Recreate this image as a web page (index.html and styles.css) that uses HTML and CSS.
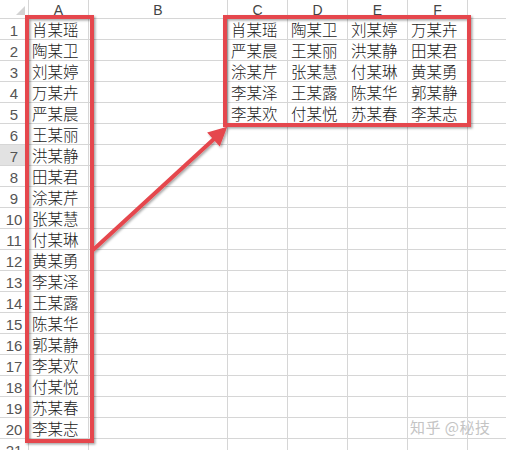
FILE: index.html
```html
<!DOCTYPE html>
<html lang="zh">
<head>
<meta charset="utf-8">
<link rel="stylesheet" href="styles.css">
</head>
<body>
<div class="sheet">
  <div class="grid" id="grid">
    <div class="corner"><span class="tri"></span></div>
    <div class="ch">A</div><div class="ch">B</div><div class="ch">C</div><div class="ch">D</div><div class="ch">E</div><div class="ch">F</div><div class="ch"></div>

    <div class="rh">1</div><div class="c">肖某瑶</div><div class="c"></div><div class="c">肖某瑶</div><div class="c">陶某卫</div><div class="c">刘某婷</div><div class="c">万某卉</div><div class="c"></div>
    <div class="rh">2</div><div class="c">陶某卫</div><div class="c"></div><div class="c">严某晨</div><div class="c">王某丽</div><div class="c">洪某静</div><div class="c">田某君</div><div class="c"></div>
    <div class="rh">3</div><div class="c">刘某婷</div><div class="c"></div><div class="c">涂某芹</div><div class="c">张某慧</div><div class="c">付某琳</div><div class="c">黄某勇</div><div class="c"></div>
    <div class="rh">4</div><div class="c">万某卉</div><div class="c"></div><div class="c">李某泽</div><div class="c">王某露</div><div class="c">陈某华</div><div class="c">郭某静</div><div class="c"></div>
    <div class="rh">5</div><div class="c">严某晨</div><div class="c"></div><div class="c">李某欢</div><div class="c">付某悦</div><div class="c">苏某春</div><div class="c">李某志</div><div class="c"></div>
    <div class="rh">6</div><div class="c">王某丽</div><div class="c"></div><div class="c"></div><div class="c"></div><div class="c"></div><div class="c"></div><div class="c"></div>
    <div class="rh sel">7</div><div class="c">洪某静</div><div class="c"></div><div class="c"></div><div class="c"></div><div class="c"></div><div class="c"></div><div class="c"></div>
    <div class="rh">8</div><div class="c">田某君</div><div class="c"></div><div class="c"></div><div class="c"></div><div class="c"></div><div class="c"></div><div class="c"></div>
    <div class="rh">9</div><div class="c">涂某芹</div><div class="c"></div><div class="c"></div><div class="c"></div><div class="c"></div><div class="c"></div><div class="c"></div>
    <div class="rh">10</div><div class="c">张某慧</div><div class="c"></div><div class="c"></div><div class="c"></div><div class="c"></div><div class="c"></div><div class="c"></div>
    <div class="rh">11</div><div class="c">付某琳</div><div class="c"></div><div class="c"></div><div class="c"></div><div class="c"></div><div class="c"></div><div class="c"></div>
    <div class="rh">12</div><div class="c">黄某勇</div><div class="c"></div><div class="c"></div><div class="c"></div><div class="c"></div><div class="c"></div><div class="c"></div>
    <div class="rh">13</div><div class="c">李某泽</div><div class="c"></div><div class="c"></div><div class="c"></div><div class="c"></div><div class="c"></div><div class="c"></div>
    <div class="rh">14</div><div class="c">王某露</div><div class="c"></div><div class="c"></div><div class="c"></div><div class="c"></div><div class="c"></div><div class="c"></div>
    <div class="rh">15</div><div class="c">陈某华</div><div class="c"></div><div class="c"></div><div class="c"></div><div class="c"></div><div class="c"></div><div class="c"></div>
    <div class="rh">16</div><div class="c">郭某静</div><div class="c"></div><div class="c"></div><div class="c"></div><div class="c"></div><div class="c"></div><div class="c"></div>
    <div class="rh">17</div><div class="c">李某欢</div><div class="c"></div><div class="c"></div><div class="c"></div><div class="c"></div><div class="c"></div><div class="c"></div>
    <div class="rh">18</div><div class="c">付某悦</div><div class="c"></div><div class="c"></div><div class="c"></div><div class="c"></div><div class="c"></div><div class="c"></div>
    <div class="rh">19</div><div class="c">苏某春</div><div class="c"></div><div class="c"></div><div class="c"></div><div class="c"></div><div class="c"></div><div class="c"></div>
    <div class="rh">20</div><div class="c">李某志</div><div class="c"></div><div class="c"></div><div class="c"></div><div class="c"></div><div class="c"></div><div class="c"></div>
    <div class="rh">21</div><div class="c"></div><div class="c"></div><div class="c"></div><div class="c"></div><div class="c"></div><div class="c"></div><div class="c"></div>
  </div>

  <svg class="annot" width="506" height="450" viewBox="0 0 506 450" xmlns="http://www.w3.org/2000/svg">
    <defs>
      <filter id="sh" x="-10%" y="-10%" width="130%" height="130%">
        <feDropShadow dx="1.5" dy="1.5" stdDeviation="1.2" flood-color="#000" flood-opacity="0.35"/>
      </filter>
    </defs>
    <g filter="url(#sh)" fill="none" stroke="#e5474d" stroke-width="4" stroke-linejoin="miter">
      <rect x="27" y="17" width="65" height="424"/>
      <rect x="225" y="17" width="244" height="108"/>
      <line x1="93" y1="250" x2="215" y2="138" stroke-linecap="round"/>
      <polygon points="226,128 219.5,145 208.5,133" fill="#e5474d" stroke-width="1.5"/>
    </g>
  </svg>

  <div class="mark">知乎 @秘技</div>
</div>
</body>
</html>
```

FILE: styles.css
```css
html, body {
  margin: 0;
  padding: 0;
  background: #ffffff;
}

.sheet {
  position: relative;
  width: 506px;
  height: 450px;
  overflow: hidden;
}

.grid {
  display: grid;
  grid-template-columns: 29px 60px 139px 60px 60px 60px 60px 40px;
  grid-template-rows: 19px repeat(21, 21px);
  font-family: "Noto Sans CJK SC", "Noto Sans", sans-serif;
}

.grid > div {
  box-sizing: border-box;
  border-right: 1px solid #d6d6d6;
  border-bottom: 1px solid #d6d6d6;
}

.corner {
  position: relative;
  background: #ffffff;
}

.tri {
  position: absolute;
  right: 3px;
  bottom: 3px;
  width: 0;
  height: 0;
  border-left: 9px solid transparent;
  border-bottom: 9px solid #d3d3d3;
}

.ch {
  display: flex;
  align-items: center;
  justify-content: center;
  font-family: "Liberation Sans", "DejaVu Sans", sans-serif;
  font-size: 14px;
  color: #444;
  line-height: 1;
  padding-top: 1px;
}

.rh {
  display: flex;
  align-items: center;
  justify-content: center;
  font-family: "Liberation Sans", "DejaVu Sans", sans-serif;
  font-size: 15px;
  color: #555;
  line-height: 1;
  padding-top: 2px;
}

.rh.sel {
  background: #e2e2e2;
}

.c {
  display: flex;
  align-items: flex-end;
  padding: 0 0 0 3px;
  font-size: 15.5px;
  font-weight: 300;
  line-height: 19px;
  color: #1a1a1a;
  white-space: nowrap;
  overflow: hidden;
}

.annot {
  position: absolute;
  left: 0;
  top: 0;
}

.mark {
  position: absolute;
  left: 410px;
  top: 416px;
  font-family: "Noto Sans CJK SC", sans-serif;
  font-size: 15px;
  color: #c4c4c4;
  letter-spacing: 0.5px;
  text-shadow: 0 0 1px #fff;
}
```
